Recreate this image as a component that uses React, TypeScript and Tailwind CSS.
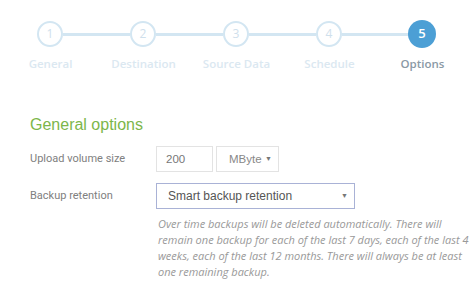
import { Fragment } from 'react';

const steps = ['General', 'Destination', 'Source Data', 'Schedule', 'Options'];
const current = 4;

function Stepper() {
  return (
    <div className="pt-[20px]">
      <div className="flex items-center ml-[37px]">
        {steps.map((_, i) => (
          <Fragment key={i}>
            {i > 0 && <div className="w-[67px] h-[3px] bg-[#d3e6f2]" />}
            {i === current ? (
              <div className="w-[28px] h-[28px] -mx-[1px] rounded-full bg-[#4c9fd5] text-white flex items-center justify-center text-[13px] font-semibold">
                {i + 1}
              </div>
            ) : (
              <div className="w-[26px] h-[26px] rounded-full border-[2px] border-[#d3e6f2] text-[#cfe0ec] flex items-center justify-center text-[12px]">
                {i + 1}
              </div>
            )}
          </Fragment>
        ))}
      </div>
      <div className="grid grid-cols-[repeat(5,93px)] ml-[4px] mt-[7px]">
        {steps.map((s, i) => (
          <div
            key={s}
            className={`text-center text-[11.5px] font-semibold ${i === current ? 'text-[#8a99a5]' : 'text-[#dbe8f1]'}`}
          >
            {s}
          </div>
        ))}
      </div>
    </div>
  );
}

function Caret() {
  return <span className="text-[7px] text-[#777]">▼</span>;
}

export default function App() {
  return (
    <div className="w-[474px] h-[302px] bg-white overflow-hidden font-['Open_Sans',sans-serif]">
      <Stepper />

      <div className="pl-[30px] pt-[45px]">
        <h2 className="font-['Liberation_Sans',Arial,sans-serif] text-[16px] text-[#7cb64a] leading-none">
          General options
        </h2>

        <div className="mt-[13px] flex items-center font-['Roboto',sans-serif] text-[11px] text-[#808080]">
          <div className="w-[126px]">Upload volume size</div>
          <div className="flex gap-[3px] font-['Liberation_Sans',Arial,sans-serif] text-[11.5px]">
            <div className="w-[57px] h-[26px] border border-[#e3e3e3] flex items-center pl-[9px] text-[#777]">200</div>
            <div className="w-[63px] h-[26px] border border-[#e3e3e3] flex items-center justify-between pl-[12px] pr-[6px] text-[#888]">
              MByte
              <Caret />
            </div>
          </div>
        </div>

        <div className="mt-[11px] flex items-center font-['Roboto',sans-serif] text-[11px] text-[#808080]">
          <div className="w-[126px]">Backup retention</div>
          <div className="w-[199px] h-[26px] border border-[#a9b2d6] flex items-center justify-between pl-[11px] pr-[6px] font-['Liberation_Sans',Arial,sans-serif] text-[12px] text-[#555]">
            Smart backup retention
            <Caret />
          </div>
        </div>

        <p className="ml-[128px] mt-[7px] w-[314px] italic text-[11px] leading-[16px] text-[#999]">
          Over time backups will be deleted automatically. There will remain one backup for each of the last 7 days, each of the last 4 weeks, each of the last 12 months. There will always be at least one remaining backup.
        </p>
      </div>
    </div>
  );
}
